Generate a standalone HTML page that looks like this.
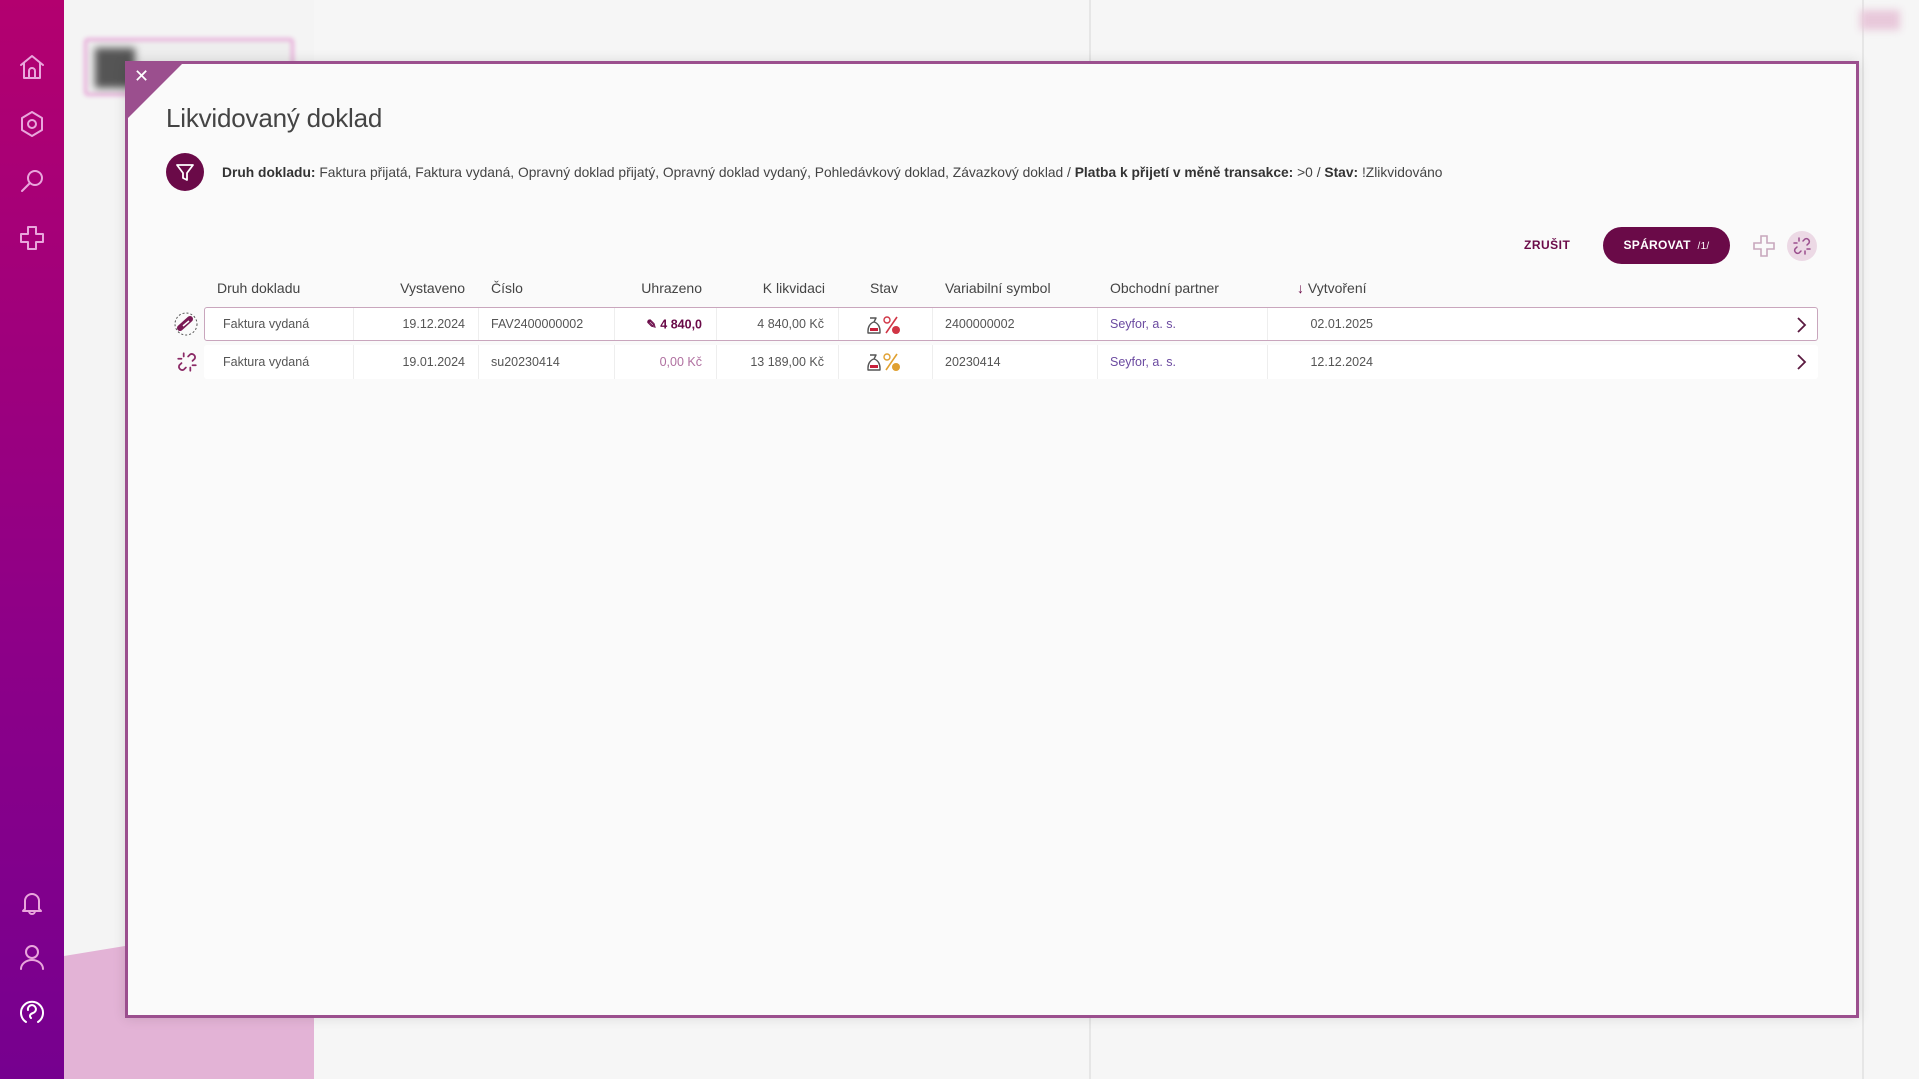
<!DOCTYPE html>
<html><head><meta charset="utf-8"><style>
*{margin:0;padding:0;box-sizing:border-box}
body{width:1919px;height:1079px;overflow:hidden;background:#f6f6f6;font-family:"Liberation Sans",sans-serif;position:relative;color:#444}
.abs{position:absolute}
#side{left:0;top:0;width:64px;height:1079px;background:linear-gradient(#b3006f,#8d0088 60%,#76008f)}
#side svg{position:absolute;left:17px;width:30px;height:30px;fill:none;stroke:#e9a6dc;stroke-width:2;stroke-linecap:round;stroke-linejoin:round}
#modal{left:125px;top:61px;width:1734px;height:957px;background:#fafafa;border:3px solid #9b4f8e;box-shadow:0 0 12px rgba(0,0,0,.12)}
.tri{left:-3px;top:-3px;width:0;height:0;border-top:60px solid #9b4f8e;border-right:60px solid transparent}
h1{position:absolute;left:38px;top:39px;font-size:26px;font-weight:normal;color:#444;letter-spacing:-.2px}
.filt{left:38px;top:89px;width:38px;height:38px;border-radius:50%;background:#6a0a48}
.ftext{left:94px;top:101px;font-size:13.8px;color:#444;white-space:nowrap}
.ftext b{color:#333}
.th{top:216px;font-size:14px;color:#444;white-space:nowrap}
.row{left:76px;width:1614px;height:34px;background:#fff;border-radius:3px}
.row.r1{top:243px;border:1px solid #c9a6bd}
.row.r2{top:281px}
.cell{top:0;height:100%;border-left:1px solid #eee}
.t{font-size:12.5px;color:#555;white-space:nowrap;top:50%;transform:translateY(-50%)}
.lnk{color:#6b4aa0}
</style></head><body>
<div class="abs" style="left:64px;top:0;width:250px;height:1079px;background:#f4f4f4"></div>
<div class="abs" style="left:84px;top:38px;width:210px;height:58px;border:3px solid #e7a8d8;border-radius:4px;filter:blur(2px);background:#eee"></div>
<div class="abs" style="left:95px;top:48px;width:40px;height:40px;background:#555;filter:blur(4px)"></div>
<div class="abs" style="left:64px;top:915px;width:250px;height:164px;background:#e3b3d6;clip-path:polygon(0 25%,100% 0,100% 100%,0 100%)"></div>
<div class="abs" style="left:1089px;top:0;width:2px;height:1079px;background:#e6e6e6"></div>
<div class="abs" style="left:1862px;top:0;width:2px;height:1079px;background:#e6e6e6"></div>
<div class="abs" style="left:1860px;top:10px;width:40px;height:20px;background:#e8c8da;filter:blur(4px)"></div>

<div id="side" class="abs">
<svg style="top:52px" viewBox="0 0 30 30"><path d="M4 13 15 4l11 9M7 11v15h16V11M12 26v-7a3 3 0 0 1 6 0v7"/></svg>
<svg style="top:109px" viewBox="0 0 30 30"><path d="M15 3l10 6v12l-10 6-10-6V9z"/><circle cx="15" cy="15" r="4"/></svg>
<svg style="top:166px" viewBox="0 0 30 30"><circle cx="18" cy="12" r="7"/><path d="M13 17 5 25"/></svg>
<svg style="top:223px" viewBox="0 0 30 30"><path d="M11 4h8v7h7v8h-7v7h-8v-7H4v-8h7z"/></svg>
<svg style="top:887px" viewBox="0 0 30 30"><path d="M8 22V14a7 7 0 0 1 14 0v8l2 2H6zM12 24a3 3 0 0 0 6 0"/></svg>
<svg style="top:942px" viewBox="0 0 30 30"><circle cx="15" cy="10" r="6"/><path d="M4 27a11 9 0 0 1 22 0"/></svg>
<svg style="top:998px;stroke:#fff" viewBox="0 0 30 30"><path d="M9 24A11 11 0 1 1 21 24"/><path d="M11 12a4 4 0 1 1 5 3c-3 1-4 3-2 5"/></svg>
</div>

<div id="modal" class="abs">
<div class="abs tri"></div>
<div class="abs" style="left:6px;top:2px;color:#fff;font-size:18px">✕</div>
<h1>Likvidovaný doklad</h1>
<div class="abs filt"><svg width="38" height="38" viewBox="0 0 38 38"><path d="M11 12h16l-6 8v7l-4-2v-5z" fill="none" stroke="#fff" stroke-width="1.8" stroke-linejoin="round"/></svg></div>
<div class="abs ftext"><b>Druh dokladu:</b> Faktura přijatá, Faktura vydaná, Opravný doklad přijatý, Opravný doklad vydaný, Pohledávkový doklad, Závazkový doklad / <b>Platba k přijetí v měně transakce:</b> &gt;0 / <b>Stav:</b> !Zlikvidováno</div>

<div class="abs" style="left:1396px;top:174px;font-size:12px;font-weight:bold;color:#6a0a48;letter-spacing:.5px">ZRUŠIT</div>
<div class="abs" style="left:1475px;top:163px;width:127px;height:37px;border-radius:19px;background:#6a0a48;color:#fff;font-size:12px;font-weight:bold;line-height:37px;text-align:center;letter-spacing:.3px">SPÁROVAT <span style="font-size:10px;font-weight:normal">&nbsp;/1/</span></div>
<svg class="abs" style="left:1624px;top:170px" width="24" height="24" viewBox="0 0 24 24"><path d="M9 2h6v7h7v6h-7v7H9v-7H2V9h7z" fill="none" stroke="#c8a8bd" stroke-width="1.6"/></svg>
<div class="abs" style="left:1659px;top:167px;width:30px;height:30px;border-radius:50%;background:#ecd9e5"></div>
<svg class="abs" style="left:1664px;top:172px" width="20" height="20" viewBox="0 0 20 20" fill="none" stroke="#9b4f8e" stroke-width="1.5" stroke-linecap="round"><path d="M11 5l2-2a3 3 0 0 1 4 4l-2 2M9 15l-2 2a3 3 0 0 1-4-4l2-2M7 2v3M2 7h3M13 18v-3M18 13h-3"/></svg>

<div class="abs th" style="left:89px">Druh dokladu</div>
<div class="abs th" style="left:237px;width:100px;text-align:right">Vystaveno</div>
<div class="abs th" style="left:363px">Číslo</div>
<div class="abs th" style="left:474px;width:100px;text-align:right">Uhrazeno</div>
<div class="abs th" style="left:597px;width:100px;text-align:right">K likvidaci</div>
<div class="abs th" style="left:742px">Stav</div>
<div class="abs th" style="left:817px">Variabilní symbol</div>
<div class="abs th" style="left:982px">Obchodní partner</div>
<div class="abs th" style="left:1169px;color:#444"><span style="color:#6a0a48">↓</span> Vytvoření</div>

<svg class="abs" style="left:46px;top:248px" width="24" height="24" viewBox="0 0 24 24"><circle cx="12" cy="12" r="11" fill="none" stroke="#555" stroke-dasharray="2 2"/><path d="M6 16l10-9" stroke="#7a1a55" stroke-width="6" stroke-linecap="round"/><path d="M9 14l6-5" stroke="#fff" stroke-width="1.5"/></svg>
<svg class="abs" style="left:48px;top:287px" width="22" height="22" viewBox="0 0 20 20" fill="none" stroke="#8b2a66" stroke-width="1.6" stroke-linecap="round"><path d="M11 5l2-2a3 3 0 0 1 4 4l-2 2M9 15l-2 2a3 3 0 0 1-4-4l2-2M7 2v3M2 7h3M13 18v-3M18 13h-3"/></svg>

<div class="abs row r1">
<div class="abs t" style="left:18px">Faktura vydaná</div>
<div class="abs cell" style="left:148px"></div>
<div class="abs t" style="left:146px;width:114px;text-align:right">19.12.2024</div>
<div class="abs cell" style="left:273px"></div>
<div class="abs t" style="left:286px">FAV2400000002</div>
<div class="abs cell" style="left:409px"></div>
<div class="abs t" style="left:407px;width:90px;text-align:right;color:#6a0a48;font-weight:bold">✎ 4 840,0</div>
<div class="abs cell" style="left:511px"></div>
<div class="abs t" style="left:507px;width:112px;text-align:right">4 840,00 Kč</div>
<div class="abs cell" style="left:633px"></div>
<svg class="abs" style="left:661px;top:7px" width="38" height="20" viewBox="0 0 38 20"><path d="M4 3h6l-2 4c4 1 6 5 6 9v2H2v-2c0-4 2-8 6-9" fill="none" stroke="#555" stroke-width="1.4" stroke-linejoin="round"/><rect x="4" y="13" width="8" height="3" fill="#c8203a"/><circle cx="21" cy="5" r="3" fill="none" stroke="#d03545" stroke-width="1.4"/><circle cx="30" cy="15" r="4" fill="#d03545"/><path d="M31 2 20 18" stroke="#d03545" stroke-width="1.6"/></svg>
<div class="abs cell" style="left:727px"></div>
<div class="abs t" style="left:740px">2400000002</div>
<div class="abs cell" style="left:892px"></div>
<div class="abs t lnk" style="left:905px">Seyfor, a. s.</div>
<div class="abs cell" style="left:1062px"></div>
<div class="abs t" style="left:1053px;width:115px;text-align:right">02.01.2025</div>
<svg class="abs" style="left:1591px;top:8px" width="12" height="18" viewBox="0 0 12 18"><path d="M2 2l7 7-7 7" fill="none" stroke="#5a1a40" stroke-width="1.8"/></svg>
</div>
<div class="abs row r2">
<div class="abs t" style="left:19px">Faktura vydaná</div>
<div class="abs cell" style="left:149px"></div>
<div class="abs t" style="left:147px;width:114px;text-align:right">19.01.2024</div>
<div class="abs cell" style="left:274px"></div>
<div class="abs t" style="left:287px">su20230414</div>
<div class="abs cell" style="left:410px"></div>
<div class="abs t" style="left:408px;width:90px;text-align:right;color:#b070a0">0,00 Kč</div>
<div class="abs cell" style="left:512px"></div>
<div class="abs t" style="left:508px;width:112px;text-align:right">13 189,00 Kč</div>
<div class="abs cell" style="left:634px"></div>
<svg class="abs" style="left:662px;top:7px" width="38" height="20" viewBox="0 0 38 20"><path d="M4 3h6l-2 4c4 1 6 5 6 9v2H2v-2c0-4 2-8 6-9" fill="none" stroke="#555" stroke-width="1.4" stroke-linejoin="round"/><rect x="4" y="13" width="8" height="3" fill="#c8203a"/><circle cx="21" cy="5" r="3" fill="none" stroke="#e0a030" stroke-width="1.4"/><circle cx="30" cy="15" r="4" fill="#e0a030"/><path d="M31 2 20 18" stroke="#e0a030" stroke-width="1.6"/></svg>
<div class="abs cell" style="left:728px"></div>
<div class="abs t" style="left:741px">20230414</div>
<div class="abs cell" style="left:893px"></div>
<div class="abs t lnk" style="left:906px">Seyfor, a. s.</div>
<div class="abs cell" style="left:1063px"></div>
<div class="abs t" style="left:1054px;width:115px;text-align:right">12.12.2024</div>
<svg class="abs" style="left:1592px;top:8px" width="12" height="18" viewBox="0 0 12 18"><path d="M2 2l7 7-7 7" fill="none" stroke="#5a1a40" stroke-width="1.8"/></svg>
</div>
</div>
</body></html>
